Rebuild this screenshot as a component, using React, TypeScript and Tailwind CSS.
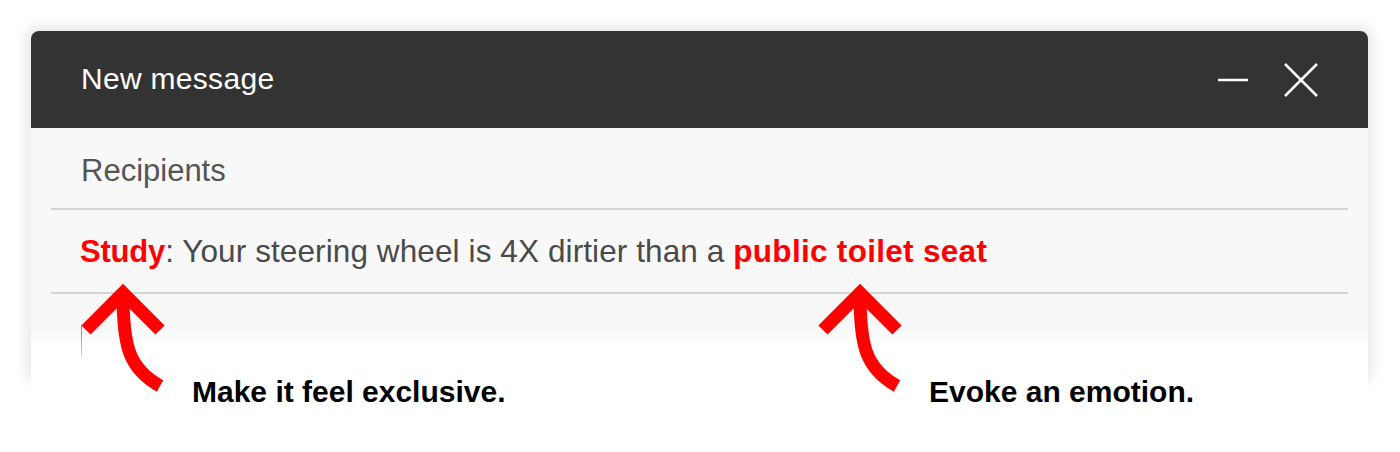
import React from "react";

function Arrow({ x }: { x: number }) {
  return (
    <svg
      className="absolute top-0 pointer-events-none"
      style={{ left: x - 123 }}
      width={200}
      height={452}
      viewBox="0 0 200 452"
    >
      <path d="M123 293 C123 345 128 368 160 386" fill="none" stroke="#ff0000" strokeWidth={13} />
      <polyline points="86,330 123,293 160,330" fill="none" stroke="#ff0000" strokeWidth={13} strokeLinejoin="miter" strokeMiterlimit={4} />
    </svg>
  );
}

export default function App() {
  const font = { fontFamily: '"Liberation Sans", Arial, sans-serif' };
  return (
    <div className="relative w-[1400px] h-[452px] bg-white overflow-hidden" style={font}>
      <div className="pt-[31px] pl-[31px]">
        <div className="w-[1337px] h-[347px] rounded-[8px] bg-white shadow-[0_0_10px_7px_rgba(0,0,0,0.07)] overflow-hidden flex flex-col">
          <div className="h-[97px] bg-[#333333] flex items-center justify-between px-[50px] shrink-0">
            <span className="text-white text-[30px] leading-none pb-[1px] tracking-[0.3px]">New message</span>
            <div className="flex items-center gap-[36px]">
              <svg width="30" height="4" viewBox="0 0 30 4">
                <line x1="0" y1="2" x2="30" y2="2" stroke="#ffffff" strokeWidth="2.5" />
              </svg>
              <svg width="34" height="34" viewBox="0 0 34 34">
                <line x1="1" y1="1" x2="33" y2="33" stroke="#ffffff" strokeWidth="2.5" />
                <line x1="33" y1="1" x2="1" y2="33" stroke="#ffffff" strokeWidth="2.5" />
              </svg>
            </div>
          </div>
          <div className="bg-[linear-gradient(to_bottom,#f8f8f8_0px,#f8f8f8_200px,#ffffff_218px)] flex-1">
            <div className="mx-[20px] h-[82px] border-b-2 border-[#d4d4d4] flex items-center pl-[30px] pt-[4px]">
              <span className="text-[#555555] text-[31px] leading-none">Recipients</span>
            </div>
            <div className="mx-[20px] h-[84px] border-b-2 border-[#d4d4d4] flex items-center pl-[29px] pt-[2px]">
              <span className="text-[#4a4a4a] text-[31.5px] leading-none whitespace-nowrap tracking-[0.1px]">
                <span className="text-[#ff0000] font-bold text-[31px] tracking-[-0.2px]">Study</span>: Your steering wheel is 4X dirtier than a{" "}
                <span className="text-[#ff0000] font-bold tracking-[0.3px]">public toilet seat</span>
              </span>
            </div>
            <div className="pl-[50px] pt-[31px]">
              <div className="w-[1px] h-[33px] bg-[linear-gradient(to_bottom,#888888,#cccccc)]" />
            </div>
          </div>
        </div>
      </div>
      <div className="absolute left-[31px] top-[345px] w-[1337px] h-[60px] bg-[linear-gradient(to_bottom,rgba(255,255,255,0),#ffffff_60%)] pointer-events-none" />
      <Arrow x={123} />
      <Arrow x={860} />
      <span className="absolute left-[192px] top-[377px] text-[30px] font-bold text-black leading-none">
        Make it feel exclusive.
      </span>
      <span className="absolute left-[929px] top-[377px] text-[30px] font-bold text-black leading-none">
        Evoke an emotion.
      </span>
    </div>
  );
}
